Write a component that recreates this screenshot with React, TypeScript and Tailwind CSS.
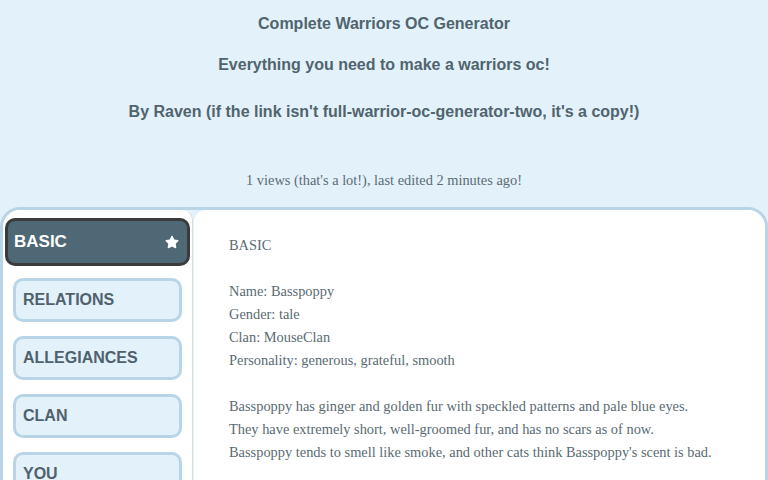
import React from "react";
import { FaStar } from "react-icons/fa";

const tabs = ["RELATIONS", "ALLEGIANCES", "CLAN", "YOU"];

const App = () => {
  return (
    <div className="h-[480px] w-[768px] bg-[#e3f1fa] text-[#50646e] overflow-hidden">
      {/* Header */}
      <div className="text-center font-['Liberation_Sans',Arial,sans-serif] font-bold text-[16px] leading-[18px]">
        <h1 className="pt-[15px]">Complete Warriors OC Generator</h1>
        <h2 className="mt-[23px]">Everything you need to make a warriors oc!</h2>
        <h3 className="mt-[29px]">
          By Raven (if the link isn't full-warrior-oc-generator-two, it's a copy!)
        </h3>
      </div>
      <p className="mt-[51px] text-center font-['Liberation_Serif','Times_New_Roman',serif] text-[14.4px] leading-[16px] text-[#5a6d76]">
        1 views (that's a lot!), last edited 2 minutes ago!
      </p>

      {/* Main box */}
      <div className="mt-[19px] h-[300px] border-[3px] border-[#b8d5e7] rounded-[20px] flex">
        {/* Sidebar */}
        <div className="w-[190px] bg-white rounded-tl-[17px] rounded-tr-[10px] border-r border-[#dcdcdc] pt-[8px] flex flex-col">
          <div className="ml-[2px] w-[185px] h-[48px] shrink-0 rounded-[10px] border-[3px] border-[#3b3b3b] bg-[#4f6875] flex items-center justify-between pl-[6px] pr-[8px] font-['Liberation_Sans',Arial,sans-serif] font-bold text-[17px] text-white">
            <span>BASIC</span>
            <FaStar className="w-[14px] h-[14px]" />
          </div>
          <div className="mt-[12px] flex flex-col gap-[14px]">
            {tabs.map((t) => (
              <div
                key={t}
                className="ml-[10px] w-[169px] h-[44px] shrink-0 rounded-[10px] border-[3px] border-[#b8d5e7] bg-[#e3f1fa] flex items-center px-[7px] font-['Liberation_Sans',Arial,sans-serif] font-bold text-[16px] text-[#4f616c]"
              >
                {t}
              </div>
            ))}
          </div>
        </div>
        {/* Content */}
        <div className="flex-1 bg-white rounded-tl-[12px] rounded-tr-[17px] ml-[1px] pt-[24px] pl-[35px] font-['Liberation_Serif','Times_New_Roman',serif] text-[14.4px] leading-[23px] text-[#5a6b73]">
          <p>BASIC</p>
          <br />
          <p>Name: Basspoppy</p>
          <p>Gender: tale</p>
          <p>Clan: MouseClan</p>
          <p>Personality: generous, grateful, smooth</p>
          <br />
          <p>Basspoppy has ginger and golden fur with speckled patterns and pale blue eyes.</p>
          <p>They have extremely short, well-groomed fur, and has no scars as of now.</p>
          <p>Basspoppy tends to smell like smoke, and other cats think Basspoppy's scent is bad.</p>
        </div>
      </div>
    </div>
  );
};

export default App;
